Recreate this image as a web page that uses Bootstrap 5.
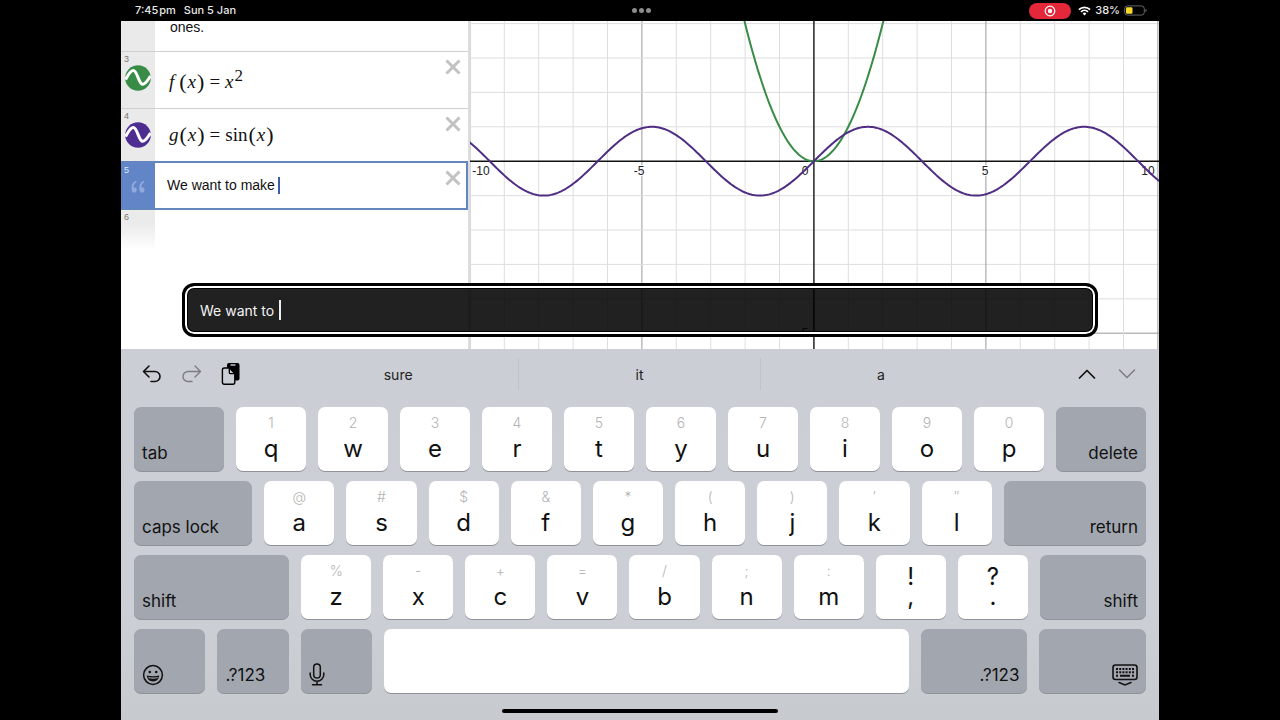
<!DOCTYPE html>
<html lang="en">
<head>
<meta charset="utf-8">
<meta name="viewport" content="width=device-width, initial-scale=1">
<title>Graphing calculator</title>
<link href="https://cdn.jsdelivr.net/npm/bootstrap@5.3.0/dist/css/bootstrap.min.css" rel="stylesheet">
<style>
  body { background: #000; font-family: Inter, "Liberation Sans", sans-serif; color: #111; }
  .device { min-height: 100vh; margin: 0 121px; }
  .device svg { display: block; flex: none; }

  /* status bar */
  .status { height: 21px; padding: 0 12px 0 14px; color: #e8e8e8; font-size: 11px; line-height: 21px; font-weight: 500; }
  .status-end { gap: 4px; }
  .rec { width: 42px; height: 16px; background: #e4283a; margin-right: 3px; }
  .dots { gap: 2px; }
  .dot { width: 5px; height: 5px; background: #8c8c8c; }

  /* calculator */
  .calc { flex: 1 1 328px; min-height: 328px; background: #fff; overflow: hidden; }
  .exprs { flex: 0 0 349px; border-right: 2px solid #ddd; font-family: "Liberation Sans", Arial, sans-serif; font-size: 14px; }
  .expr { border-bottom: 1px solid #cfcfcf; }
  .gutter { width: 34px; background: #eaeaea; padding: 2px 3px 0; flex: none; font-size: 9px; line-height: 11px; color: #777; }
  .gutter svg { margin-left: 1px; }
  .expr-tail { height: 31px; }
  .expr-tail .body-text { line-height: 12px; padding-left: 15px; }
  .expr-f { height: 57px; }
  .expr-g { height: 53px; }
  .expr-note { height: 49px; margin-top: -1px; border: 2px solid #6286bd; border-left: 0; }
  .expr-note .gutter { background: #6285c8; color: #dfe8fa; }
  .expr-note .del { width: 26px; }
  .expr-new { height: 40px; }
  .expr-new .gutter { background: linear-gradient(#ebebeb 35%, #fff); }
  .math { font-family: "Liberation Serif", "Times New Roman", serif; font-size: 19px; line-height: 24px; padding-left: 14px; gap: 1px; }
  .expr-f .math { padding-top: 3px; }
  .math sup { font-size: 17px; top: -6px; }
  .math .fn { margin-right: 4px; }
  .paren { font-size: 22px; }
  .equals { margin: 0 4px; }
  .del { width: 30px; height: 30px; padding: 0; border: 0; background: none; }
  .bare { border: 0; padding: 0; background: none; color: inherit; outline: 0; min-width: 0; }
  .note-input { width: 111px; margin-left: 12px; }
  .note-caret { width: 2px; height: 17px; background: #3c5dab; }
  .plot { min-width: 0; }
  .plot text { font: 12px "Liberation Sans", Arial, sans-serif; fill: #222; text-anchor: middle; }

  /* floating text preview */
  .preview { left: 61px; right: 61px; bottom: 12px; height: 54px; border: 3px solid #000; border-radius: 12px; background: rgba(0,0,0,.87); box-shadow: inset 0 0 0 2px #fff, inset 0 0 0 3px #000; color: #f4f4f4; font-size: 14px; padding-left: 15px; }
  .preview-input { width: 79px; }
  .preview-caret { width: 2px; height: 20px; background: #eee; }

  /* keyboard */
  .keyboard { background: linear-gradient(#cbced4, #cccfd5 70%, #c7cbcf); }
  .tools { height: 49px; }
  .tools-start { flex: 0 0 157px; padding-left: 20px; gap: 18px; }
  .tools-end { flex: 0 0 158px; padding-right: 22px; gap: 20px; }
  .guess { flex: 1 1 0; height: 32px; padding: 2px 0 0; font-size: 14px; color: #222; }
  .guess + .guess { border-left: 1px solid #bfc2c8; }
  .keys { padding: 9px 13px 0; gap: 10px; }
  .key-row { gap: 12px; }
  .key { height: 64px; border: 0; border-radius: 7px; padding: 0 0 6px; background: #fff; color: #111; box-shadow: 0 1px 0 #8f9299; flex: 70 1 70px; min-width: 0; }
  .key small { display: block; font-size: 14px; line-height: 20px; color: #b4b4b4; font-weight: 300; padding-top: 6px; }
  .key b { display: block; font-size: 24px; line-height: 32px; font-weight: 400; }
  .key-punct { padding: 0; }
  .key-punct b { line-height: 20px; }
  .mod { background: #a2a6af; display: flex; align-items: flex-end; padding: 0 8px 7px; font-size: 17px; line-height: 21px; }
  .mod-end { justify-content: flex-end; }
  .w71 { flex: 71 1 71px; }
  .w90 { flex: 90 1 90px; }
  .w106 { flex: 106 1 106px; }
  .w118 { flex: 118 1 118px; }
  .w142 { flex: 142 1 142px; }
  .w155 { flex: 155 1 155px; }
  .w522 { flex: 522 1 522px; }
  .home-area { height: 27px; padding-top: 16px; }
  .home-bar { width: 276px; height: 4px; background: #000; }
</style>
</head>
<body>
<div class="device d-flex flex-column">
  <header class="status d-flex align-items-center">
    <div class="d-flex gap-2 col"><span>7:45&#8202;pm</span><span>Sun 5 Jan</span></div>
    <div class="dots d-flex"><i class="dot rounded-circle"></i><i class="dot rounded-circle"></i><i class="dot rounded-circle"></i></div>
    <div class="status-end d-flex col justify-content-end align-items-center">
      <span class="rec rounded-pill d-flex align-items-center justify-content-center">
        <svg width="12" height="12" viewBox="0 0 12 12"><circle cx="6" cy="6" r="4.8" fill="none" stroke="#fff" stroke-width="1.2"/><circle cx="6" cy="6" r="2.2" fill="#fff"/></svg>
      </span>
      <svg width="13" height="10" viewBox="0 0 13 10" fill="none" stroke="#fff" stroke-width="1.7"><path d="M.9 3.6a8 8 0 0 1 11.2 0M3 5.8a5 5 0 0 1 7 0"/><path d="M6.5 9.5 4.6 7.5a2.7 2.7 0 0 1 3.8 0z" fill="#fff" stroke="none"/></svg>
      <span>38%</span>
      <svg width="23" height="11" viewBox="0 0 23 11"><rect x=".7" y=".9" width="19.6" height="9.2" rx="2.8" fill="none" stroke="#666"/><rect x="2" y="2.2" width="6.5" height="6.6" rx="1.2" fill="#f5d92c"/><path d="M21.5 3.8v3.4q1.2-.4 1.2-1.7t-1.2-1.7z" fill="#666"/></svg>
    </div>
  </header>

  <main class="calc d-flex position-relative">
    <section class="exprs">
      <div class="expr expr-tail d-flex"><div class="gutter"></div><div class="body-text">ones.</div></div>
      <div class="expr expr-f d-flex">
        <div class="gutter">3
          <svg width="26" height="26" viewBox="0 0 26 26"><circle cx="13" cy="13" r="12.8" fill="#388c46"/><path d="M.5 14.500C3 10.500 5.200 5.500 8.300 5.500c4.200 0 5.200 13.800 9.400 13.800 3 0 5-4.300 7.800-8.300" fill="none" stroke="#fff" stroke-width="3"/></svg>
        </div>
        <div class="math d-flex align-items-center flex-fill"><i class="fn">f</i><span class="paren">(</span><i>x</i><span class="paren">)</span><span class="equals">=</span><i>x</i><sup>2</sup></div>
        <button class="del d-flex align-items-center justify-content-center" aria-label="Delete expression 3"><svg width="16" height="16" viewBox="0 0 16 16"><path d="m1.500 1.500 13 13m0-13-13 13" stroke="#c2c2c2" stroke-width="3"/></svg></button>
      </div>
      <div class="expr expr-g d-flex">
        <div class="gutter">4
          <svg width="26" height="26" viewBox="0 0 26 26"><circle cx="13" cy="13" r="12.800" fill="#4e2d91"/><path d="M.5 14.500C3 10.500 5.200 5.500 8.300 5.500c4.200 0 5.200 13.800 9.400 13.800 3 0 5-4.300 7.800-8.300" fill="none" stroke="#fff" stroke-width="3"/></svg>
        </div>
        <div class="math d-flex align-items-center flex-fill"><i>g</i><span class="paren">(</span><i>x</i><span class="paren">)</span><span class="equals">=</span><span>sin</span><span class="paren">(</span><i>x</i><span class="paren">)</span></div>
        <button class="del d-flex align-items-center justify-content-center" aria-label="Delete expression 4"><svg width="16" height="16" viewBox="0 0 16 16"><path d="m1.500 1.500 13 13m0-13-13 13" stroke="#c2c2c2" stroke-width="3"/></svg></button>
      </div>
      <div class="expr-note d-flex">
        <div class="gutter">5
          <svg width="26" height="24" viewBox="0 0 26 24" fill="#8fa9dc"><path d="M11.200 4.800c-3.600 1-4.700 4.200-4.700 7.600 0 2.700 1 4.200 2.700 4.200 1.500 0 2.500-1.200 2.500-2.700s-1-2.600-2.500-2.600H8.400c.2-2.200 1.200-4.200 3.200-5zM19 4.800c-3.600 1-4.700 4.200-4.700 7.600 0 2.700 1 4.200 2.700 4.200 1.500 0 2.500-1.200 2.500-2.700s-1-2.600-2.500-2.600h-.8c.2-2.200 1.200-4.200 3.200-5z"/></svg>
        </div>
        <div class="d-flex align-items-center flex-fill"><input class="bare note-input" aria-label="Note" value="We want to make "><span class="note-caret"></span></div>
        <button class="del d-flex align-items-center justify-content-center" aria-label="Delete note 5"><svg width="16" height="16" viewBox="0 0 16 16"><path d="m1.500 1.500 13 13m0-13-13 13" stroke="#c2c2c2" stroke-width="3"/></svg></button>
      </div>
      <div class="expr-new d-flex"><div class="gutter">6</div></div>
    </section>
    <section class="plot flex-fill position-relative">
      <svg id="plot" class="position-absolute w-100 h-100" viewBox="0 0 689 328" preserveAspectRatio="xMidYMid slice" role="img" aria-label="Graph of x squared and sin x"></svg>
    </section>
    <div class="preview position-absolute d-flex align-items-center">
      <input class="bare preview-input" aria-label="Typed text" value="We want to "><span class="preview-caret"></span>
    </div>
  </main>

  <section class="keyboard">
    <div class="tools d-flex align-items-center">
      <div class="tools-start d-flex align-items-center">
        <button class="bare" aria-label="Undo"><svg width="22" height="20" viewBox="0 0 22 20" fill="none" stroke="#111" stroke-width="1.600" stroke-linecap="round" stroke-linejoin="round"><path d="M8 2 2.500 7.500 8 13M2.500 7.500h11.500a5 5 0 0 1 0 10H10"/></svg></button>
        <button class="bare" aria-label="Redo"><svg width="22" height="20" viewBox="0 0 22 20" fill="none" stroke="#7b7d82" stroke-width="1.400" stroke-linecap="round" stroke-linejoin="round"><path d="m14 2 5.500 5.500L14 13M19.500 7.500H7a5 5 0 0 0 0 10h4"/></svg></button>
        <button class="bare" aria-label="Paste"><svg width="20" height="24" viewBox="0 0 20 24"><path d="M8 1h8.500q2 0 2 2v13.500q0 2-2 2H9L6 5V3q0-2 2-2z" fill="#000"/><path d="M9.500 3h5" stroke="#cbced4" stroke-width="1.400"/><path d="M3.300 6h5.200l5.300 5.500v8.800q0 1.900-1.900 1.900H3.300q-1.900 0-1.900-1.900V7.900Q1.400 6 3.300 6z" fill="#cbced4" stroke="#000" stroke-width="1.400"/><path d="M8.300 6.300v4.200q0 1.200 1.200 1.200h4" fill="none" stroke="#000" stroke-width="1.300"/></svg></button>
      </div>
      <div class="d-flex flex-fill">
        <button class="bare guess">sure</button><button class="bare guess">it</button><button class="bare guess">a</button>
      </div>
      <div class="tools-end d-flex align-items-center justify-content-end">
        <button class="bare" aria-label="Previous"><svg width="20" height="12" viewBox="0 0 20 12" fill="none" stroke="#111" stroke-width="1.700" stroke-linecap="round" stroke-linejoin="round"><path d="M2.500 10 10 2.500l7.500 7.500"/></svg></button>
        <button class="bare" aria-label="Next"><svg width="20" height="12" viewBox="0 0 20 12" fill="none" stroke="#7b7d82" stroke-width="1.500" stroke-linecap="round" stroke-linejoin="round"><path d="m2.500 2 7.500 7.500L17.500 2"/></svg></button>
      </div>
    </div>

    <div class="keys d-flex flex-column">
      <div class="key-row d-flex">
        <button class="key mod w90">tab</button>
        <button class="key"><small>1</small><b>q</b></button>
        <button class="key"><small>2</small><b>w</b></button>
        <button class="key"><small>3</small><b>e</b></button>
        <button class="key"><small>4</small><b>r</b></button>
        <button class="key"><small>5</small><b>t</b></button>
        <button class="key"><small>6</small><b>y</b></button>
        <button class="key"><small>7</small><b>u</b></button>
        <button class="key"><small>8</small><b>i</b></button>
        <button class="key"><small>9</small><b>o</b></button>
        <button class="key"><small>0</small><b>p</b></button>
        <button class="key mod mod-end w90">delete</button>
      </div>
      <div class="key-row d-flex">
        <button class="key mod w118">caps lock</button>
        <button class="key"><small>@</small><b>a</b></button>
        <button class="key"><small>#</small><b>s</b></button>
        <button class="key"><small>$</small><b>d</b></button>
        <button class="key"><small>&amp;</small><b>f</b></button>
        <button class="key"><small>*</small><b>g</b></button>
        <button class="key"><small>(</small><b>h</b></button>
        <button class="key"><small>)</small><b>j</b></button>
        <button class="key"><small>′</small><b>k</b></button>
        <button class="key"><small>″</small><b>l</b></button>
        <button class="key mod mod-end w142">return</button>
      </div>
      <div class="key-row d-flex">
        <button class="key mod w155">shift</button>
        <button class="key"><small>%</small><b>z</b></button>
        <button class="key"><small>-</small><b>x</b></button>
        <button class="key"><small>+</small><b>c</b></button>
        <button class="key"><small>=</small><b>v</b></button>
        <button class="key"><small>/</small><b>b</b></button>
        <button class="key"><small>;</small><b>n</b></button>
        <button class="key"><small>:</small><b>m</b></button>
        <button class="key key-punct"><b>!</b><b>,</b></button>
        <button class="key key-punct"><b>?</b><b>.</b></button>
        <button class="key mod mod-end w106">shift</button>
      </div>
      <div class="key-row d-flex">
        <button class="key mod w71" aria-label="Emoji"><svg width="22" height="22" viewBox="0 0 22 22"><circle cx="11" cy="11" r="9.400" fill="none" stroke="#111" stroke-width="1.500"/><circle cx="7.800" cy="8" r="1.300" fill="#111"/><circle cx="14.200" cy="8" r="1.300" fill="#111"/><path d="M4.800 11.500q6.200 1.600 12.400 0-.6 5.900-6.200 5.900t-6.200-5.900z" fill="#111"/><path d="M6.200 12.900q4.800 1 9.600 0l-.4 1.300q-4.400.9-8.800 0z" fill="#a2a6af"/></svg></button>
        <button class="key mod w71">.?123</button>
        <button class="key mod w71" aria-label="Dictate"><svg width="16" height="23" viewBox="0 0 16 23" fill="none" stroke="#111" stroke-width="1.500" stroke-linecap="round"><rect x="4.700" y="1" width="6.600" height="14" rx="3.300"/><path d="M1.200 10v1.500a6.800 6.800 0 0 0 13.600 0V10M8 18.300v3.200M3.500 21.700h9"/></svg></button>
        <button class="key w522" aria-label="Space"></button>
        <button class="key mod mod-end w106">.?123</button>
        <button class="key mod mod-end w106" aria-label="Hide keyboard"><svg width="26" height="22" viewBox="0 0 26 22" fill="none" stroke="#111"><rect x="1" y="1" width="24" height="14.500" rx="2.500" stroke-width="1.600"/><path d="M4 5h18M4 8.300h18" stroke-width="1.900" stroke-dasharray="2 1.200"/><path d="M4 11.800h2M8 11.800h10M20 11.800h2" stroke-width="1.900"/><path d="m7 18.500 6 2.500 6-2.500" stroke-width="1.500" stroke-linecap="round"/></svg></button>
      </div>
    </div>
    <div class="home-area d-flex justify-content-center"><div class="home-bar rounded-pill"></div></div>
  </section>
</div>

<script src="https://cdn.jsdelivr.net/npm/bootstrap@5.3.0/dist/js/bootstrap.bundle.min.js"></script>
<script>
  // Origin and scale of the plot in viewBox units
  const ox = 343.9, oy = 140.2, u = 34.4;
  const X = x => ox + x * u, Y = y => oy - y * u;
  const line = (x1, y1, x2, y2, c, w) => `<path d="M${x1} ${y1}L${x2} ${y2}" stroke="${c}" stroke-width="${w}"/>`;
  const curve = (f, a, b, c) => {
    let d = '';
    for (let x = a; x <= b; x += 0.05) d += (d ? 'L' : 'M') + X(x).toFixed(2) + ' ' + Y(f(x)).toFixed(2);
    return `<path d="${d}" fill="none" stroke="${c}" stroke-width="2"/>`;
  };
  let s = '';
  for (let i = -12; i <= 12; i++) if (i) {
    const c = i % 5 ? '#dedede' : '#999';
    s += line(X(i), -50, X(i), 400, c, 1) + line(-100, Y(i), 800, Y(i), c, 1);
  }
  s += line(ox, -50, ox, 400, '#222', 1.5) + line(-100, oy, 800, oy, '#111', 1.5);
  [[-10, 11], [-5, 169], [0, 335], [5, 515], [10, 678]].forEach(([t, x]) =>
    s += `<text x="${x}" y="154" stroke="#fff" stroke-width="2" paint-order="stroke">${t}</text>`);
  s += '<text x="333" y="316">-5</text>';
  s += curve(x => x * x, -2.2, 2.2, '#388c46') + curve(Math.sin, -12, 12, '#4e2d83');
  document.getElementById('plot').innerHTML = s;
</script>
</body>
</html>
